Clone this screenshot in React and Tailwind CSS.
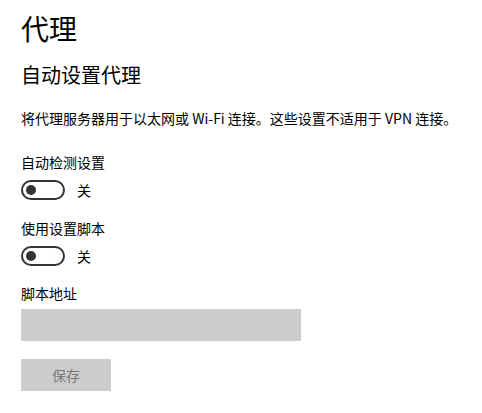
import React from "react";

const font = {
  fontFamily: '"Noto Sans CJK SC", "Noto Sans", "Liberation Sans", sans-serif',
};

function Toggle({ label }) {
  return (
    <div className="flex items-center h-5 gap-3">
      <div className="w-11 h-5 rounded-full border-2 border-[#333333] flex items-center px-[3px]">
        <span className="w-[10px] h-[10px] rounded-full bg-[#333333]" />
      </div>
      <span className="text-[14px] leading-5 text-black">{label}</span>
    </div>
  );
}

export default function App() {
  return (
    <div
      className="w-[482px] h-[413px] bg-white pl-[21px] text-black overflow-hidden"
      style={font}
    >
      {/* Page title */}
      <h1 className="mt-[10px] text-[28px] leading-9 font-normal">代理</h1>

      {/* Section */}
      <h2 className="mt-[15px] text-[20px] leading-7 font-normal">自动设置代理</h2>

      <p className="mt-[19px] text-[14px] leading-5 whitespace-nowrap">
        将代理服务器用于以太网或 Wi-Fi 连接。这些设置不适用于 VPN 连接。
      </p>

      <div className="mt-6 text-[14px] leading-5">自动检测设置</div>
      <div className="mt-2">
        <Toggle label="关" />
      </div>

      <div className="mt-[18px] text-[14px] leading-5">使用设置脚本</div>
      <div className="mt-2">
        <Toggle label="关" />
      </div>

      <div className="mt-[17px] text-[14px] leading-5">脚本地址</div>
      <div className="mt-[6px] w-[280px] h-8 bg-[#cccccc]" />

      <button
        type="button"
        disabled
        className="mt-[18px] w-[90px] h-8 bg-[#cccccc] text-[#7a7a7a] text-[14px] flex items-center justify-center"
      >
        保存
      </button>
    </div>
  );
}
